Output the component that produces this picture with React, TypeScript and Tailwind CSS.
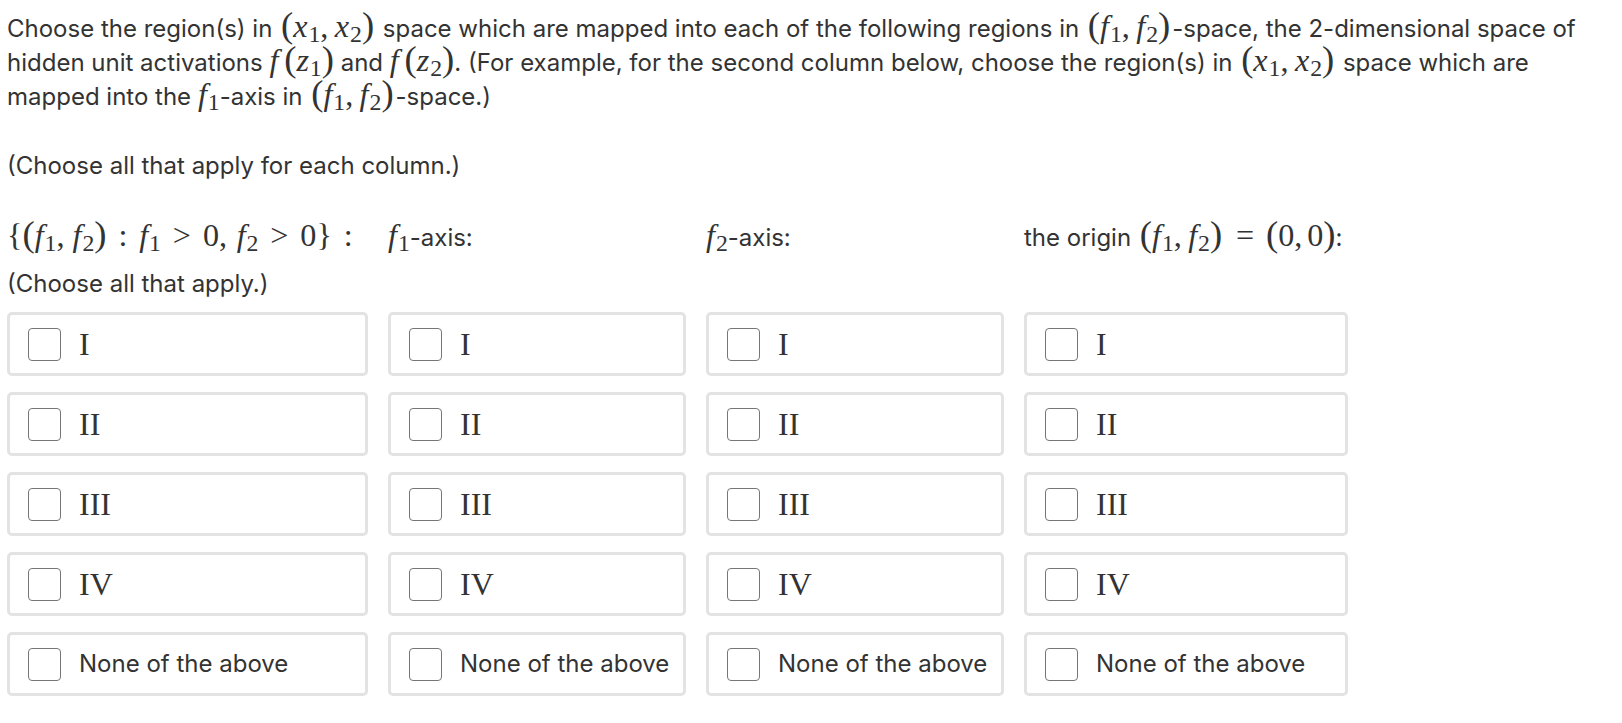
import React from "react";

const serif = "font-['Liberation_Serif','DejaVu_Serif',serif]";

// italic variable with optional upright subscript
const V: React.FC<{ c: string; s?: string }> = ({ c, s }) => (
  <>
    <span className="italic">{c}</span>
    {s ? <span className="relative top-[0.22em] ml-[0.04em] text-[0.74em] not-italic">{s}</span> : null}
  </>
);

const Math: React.FC<{ children: React.ReactNode }> = ({ children }) => (
  <span className={`${serif} whitespace-nowrap text-[1.34em] leading-[0]`}>{children}</span>
);

const P: React.FC<{ c: string }> = ({ c }) => <span className="text-[1.14em] leading-[0]">{c}</span>;

const Pair: React.FC<{ a: string; b: string }> = ({ a, b }) => (
  <Math>
    <span className="mx-[0.06em]">
      <P c="(" />
      <V c={a} s="1" />
      <span className="mr-[0.2em]">,</span>
      <V c={b} s="2" />
      <P c=")" />
    </span>
  </Math>
);

const Op: React.FC<{ c: string }> = ({ c }) => <span className="mx-[0.37em]">{c}</span>;

const labels = ["I", "II", "III", "IV", "None"];
const cols = "grid-cols-[361px_298px_298px_324px]";

function Card({ label }: { label: string }) {
  return (
    <label className="flex h-[64px] items-center gap-[18px] rounded-[5px] border-[3px] border-[#e3e3e3] bg-white pl-[18px]">
      <span className="h-[33px] w-[33px] shrink-0 rounded-[4px] border border-[#767676] bg-white" />
      {label === "None" ? (
        <span>None of the above</span>
      ) : (
        <span className={`${serif} text-[32px] leading-none text-[#333]`}>{label}</span>
      )}
    </label>
  );
}

export default function App() {
  return (
    <div className="min-h-screen bg-white px-[7px] pt-[12px] font-['Inter','Liberation_Sans',sans-serif] text-[24px] leading-[34px] text-[#333]">
      <div className="whitespace-nowrap">
        <div className="h-[34px]">
          Choose the region(s) in <Pair a="x" b="x" /> space which are mapped into each of the following regions in{" "}
          <Pair a="f" b="f" />
          -space, the 2-dimensional space of
        </div>
        <div className="h-[34px]">
          hidden unit activations{" "}
          <Math>
            <V c="f" />
            <span className="ml-[0.18em]">
              <P c="(" />
            </span>
            <V c="z" s="1" />
            <P c=")" />
          </Math>{" "}
          and{" "}
          <Math>
            <V c="f" />
            <span className="ml-[0.18em]">
              <P c="(" />
            </span>
            <V c="z" s="2" />
            <P c=")" />
          </Math>
          . (For example, for the second column below, choose the region(s) in <Pair a="x" b="x" /> space which are
        </div>
        <div className="h-[34px]">
          mapped into the{" "}
          <Math>
            <V c="f" s="1" />
          </Math>
          -axis in <Pair a="f" b="f" />
          -space.)
        </div>
      </div>

      <div className="mt-[34.5px] h-[34px]">(Choose all that apply for each column.)</div>

      <div className={`mt-[38.5px] grid h-[34px] ${cols} items-center gap-x-[20px] whitespace-nowrap`}>
        <div>
          <Math>
            {"{"}
            <P c="(" />
            <V c="f" s="1" />
            <span className="mr-[0.25em]">,</span>
            <V c="f" s="2" />
            <P c=")" />
            <Op c=":" />
            <V c="f" s="1" />
            <Op c=">" />
            0,<span className="ml-[0.3em]" />
            <V c="f" s="2" />
            <Op c=">" />
            0{"}"}
            <Op c=":" />
          </Math>
        </div>
        <div>
          <Math>
            <V c="f" s="1" />
          </Math>
          -axis:
        </div>
        <div>
          <Math>
            <V c="f" s="2" />
          </Math>
          -axis:
        </div>
        <div>
          the origin <Pair a="f" b="f" />
          <Math>
            <Op c="=" />
            <P c="(" />
            0,<span className="ml-[0.15em]" />0
            <P c=")" />
          </Math>
          :
        </div>
      </div>

      <div className="mt-[11.5px] h-[34px]">(Choose all that apply.)</div>

      <div className={`mt-[11.5px] grid ${cols} gap-x-[20px] gap-y-[16px]`}>
        {labels.map((l) =>
          [0, 1, 2, 3].map((c) => <Card key={`${l}-${c}`} label={l} />)
        )}
      </div>
    </div>
  );
}
